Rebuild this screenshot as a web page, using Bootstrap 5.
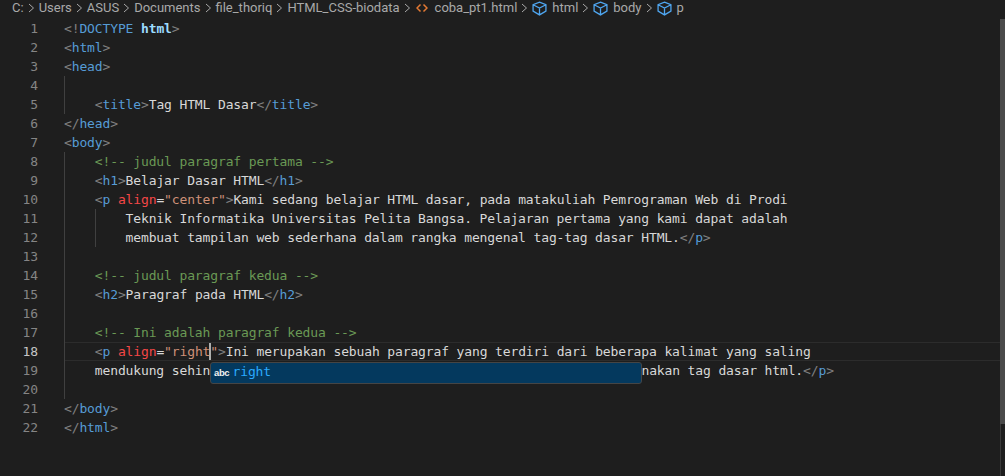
<!DOCTYPE html>
<html lang="en">
<head>
<meta charset="utf-8">
<link href="https://cdn.jsdelivr.net/npm/bootstrap@5.3.0/dist/css/bootstrap.min.css" rel="stylesheet">
<style>
html,body{height:476px;overflow:hidden;background:#1e1e1e}
.editor-shell{position:relative;height:476px;background:#1e1e1e;overflow:hidden}
.crumbs{height:19px;padding:0 0 3px 12px;font:13px/16px Roboto,"Noto Sans",sans-serif;color:#a9a9a9;white-space:nowrap}
.crumbs svg{flex:none}
.sep{width:9px;height:12px;margin:0 3px}
.sep path{fill:none;stroke:#a9a9a9}
.cube{width:15px;height:15px;margin-right:5px}
.cube path{fill:none;stroke:#4fa6f0;stroke-width:1.2}
.file-glyph{width:12px;height:10px;margin:0 7px 0 1px}
.file-glyph path{fill:none;stroke:#e37933;stroke-width:1.5}
.code-line{height:19px;font:13px/19px "DejaVu Sans Mono","Liberation Mono",monospace;letter-spacing:-.13px;white-space:pre;color:#d8d8d8}
.num{flex:0 0 38px;text-align:right;color:#858585}
.txt{flex:1;margin:0 5px 0 26px}
.current .txt{box-shadow:inset 0 1px 0 #2c2c2c,inset 0 -1px 0 #2c2c2c}
.current .num{color:#c6c6c6}
.gap-under-popup{display:inline-block;width:431.2px}
.p{color:#808080}.t{color:#569cd6}.a{color:#f44747}.s{color:#ce9178}.c{color:#6a9955}
.kw{color:#9cdcfe;font-weight:700}
.guide{position:absolute;width:1px;background:#404040}
.g1{left:64px;top:76px;height:38px}
.g2{left:64px;top:152px;height:247px}
.g3{left:95px;top:209px;height:38px}
.caret{position:absolute;left:209px;top:343px;width:2px;height:17px;background:#aeafad}
.suggest{position:absolute;left:210px;top:362px;width:432px;height:22px;background:#04395e;border:1px solid #454545;border-radius:3px;font:13px/17px "DejaVu Sans Mono","Liberation Mono",monospace;letter-spacing:-.13px}
.suggest b{font-weight:400;color:#2aaaff}
.abc{font:700 9.5px/19px "Liberation Sans",sans-serif;letter-spacing:-.4px;width:21.500px;padding-left:3px;color:#f0f0f0}
.scroll-strip{position:absolute;right:0;top:19px;width:5px;height:405px;background:#4a4a4a}
.scroll-edge{position:absolute;left:1000px;top:424px;width:1px;height:52px;background:#3a3a3a}
</style>
</head>
<body>
<div class="editor-shell">
  <div class="crumbs d-flex align-items-center">
    <span>C:</span><svg class="sep" viewBox="0 0 9 12"><path d="M2 2l4.500 4-4.500 4"/></svg>
    <span>Users</span><svg class="sep" viewBox="0 0 9 12"><path d="M2 2l4.500 4-4.500 4"/></svg>
    <span>ASUS</span><svg class="sep" viewBox="0 0 9 12"><path d="M2 2l4.500 4-4.500 4"/></svg>
    <span>Documents</span><svg class="sep" viewBox="0 0 9 12"><path d="M2 2l4.500 4-4.500 4"/></svg>
    <span>file_thoriq</span><svg class="sep" viewBox="0 0 9 12"><path d="M2 2l4.500 4-4.500 4"/></svg>
    <span>HTML_CSS-biodata</span><svg class="sep" viewBox="0 0 9 12"><path d="M2 2l4.500 4-4.500 4"/></svg>
    <svg class="file-glyph" viewBox="0 0 12 10"><path d="M4.500 1.500L1 5l3.500 3.500M7.500 1.500L11 5 7.500 8.500"/></svg>
    <span>coba_pt1.html</span><svg class="sep" viewBox="0 0 9 12"><path d="M2 2l4.500 4-4.500 4"/></svg>
    <svg class="cube" viewBox="0 0 14 14"><path d="M7 1l6 2.500v6L7 13 1 9.500v-6zM1 3.500L7 6.500l6-3M7 6.500V13"/></svg>
    <span>html</span><svg class="sep" viewBox="0 0 9 12"><path d="M2 2l4.500 4-4.500 4"/></svg>
    <svg class="cube" viewBox="0 0 14 14"><path d="M7 1l6 2.500v6L7 13 1 9.500v-6zM1 3.500L7 6.500l6-3M7 6.500V13"/></svg>
    <span>body</span><svg class="sep" viewBox="0 0 9 12"><path d="M2 2l4.500 4-4.500 4"/></svg>
    <svg class="cube" viewBox="0 0 14 14"><path d="M7 1l6 2.500v6L7 13 1 9.500v-6zM1 3.500L7 6.500l6-3M7 6.500V13"/></svg>
    <span>p</span>
  </div>
  <div class="code-line d-flex"><span class="num">1</span><span class="txt"><span class="p">&lt;!</span><span class="t">DOCTYPE</span> <span class="kw">html</span><span class="p">&gt;</span></span></div>
  <div class="code-line d-flex"><span class="num">2</span><span class="txt"><span class="p">&lt;</span><span class="t">html</span><span class="p">&gt;</span></span></div>
  <div class="code-line d-flex"><span class="num">3</span><span class="txt"><span class="p">&lt;</span><span class="t">head</span><span class="p">&gt;</span></span></div>
  <div class="code-line d-flex"><span class="num">4</span><span class="txt"></span></div>
  <div class="code-line d-flex"><span class="num">5</span><span class="txt">    <span class="p">&lt;</span><span class="t">title</span><span class="p">&gt;</span>Tag HTML Dasar<span class="p">&lt;/</span><span class="t">title</span><span class="p">&gt;</span></span></div>
  <div class="code-line d-flex"><span class="num">6</span><span class="txt"><span class="p">&lt;/</span><span class="t">head</span><span class="p">&gt;</span></span></div>
  <div class="code-line d-flex"><span class="num">7</span><span class="txt"><span class="p">&lt;</span><span class="t">body</span><span class="p">&gt;</span></span></div>
  <div class="code-line d-flex"><span class="num">8</span><span class="txt">    <span class="c">&lt;!-- judul paragraf pertama --&gt;</span></span></div>
  <div class="code-line d-flex"><span class="num">9</span><span class="txt">    <span class="p">&lt;</span><span class="t">h1</span><span class="p">&gt;</span>Belajar Dasar HTML<span class="p">&lt;/</span><span class="t">h1</span><span class="p">&gt;</span></span></div>
  <div class="code-line d-flex"><span class="num">10</span><span class="txt">    <span class="p">&lt;</span><span class="t">p</span> <span class="a">align</span>=<span class="s">"center"</span><span class="p">&gt;</span>Kami sedang belajar HTML dasar, pada matakuliah Pemrograman Web di Prodi</span></div>
  <div class="code-line d-flex"><span class="num">11</span><span class="txt">        Teknik Informatika Universitas Pelita Bangsa. Pelajaran pertama yang kami dapat adalah</span></div>
  <div class="code-line d-flex"><span class="num">12</span><span class="txt">        membuat tampilan web sederhana dalam rangka mengenal tag-tag dasar HTML.<span class="p">&lt;/</span><span class="t">p</span><span class="p">&gt;</span></span></div>
  <div class="code-line d-flex"><span class="num">13</span><span class="txt"></span></div>
  <div class="code-line d-flex"><span class="num">14</span><span class="txt">    <span class="c">&lt;!-- judul paragraf kedua --&gt;</span></span></div>
  <div class="code-line d-flex"><span class="num">15</span><span class="txt">    <span class="p">&lt;</span><span class="t">h2</span><span class="p">&gt;</span>Paragraf pada HTML<span class="p">&lt;/</span><span class="t">h2</span><span class="p">&gt;</span></span></div>
  <div class="code-line d-flex"><span class="num">16</span><span class="txt"></span></div>
  <div class="code-line d-flex"><span class="num">17</span><span class="txt">    <span class="c">&lt;!-- Ini adalah paragraf kedua --&gt;</span></span></div>
  <div class="code-line current d-flex"><span class="num">18</span><span class="txt">    <span class="p">&lt;</span><span class="t">p</span> <span class="a">align</span>=<span class="s">"right"</span><span class="p">&gt;</span>Ini merupakan sebuah paragraf yang terdiri dari beberapa kalimat yang saling</span></div>
  <div class="code-line d-flex"><span class="num">19</span><span class="txt">    mendukung sehin<span class="gap-under-popup"></span>nakan tag dasar html.<span class="p">&lt;/</span><span class="t">p</span><span class="p">&gt;</span></span></div>
  <div class="code-line d-flex"><span class="num">20</span><span class="txt"></span></div>
  <div class="code-line d-flex"><span class="num">21</span><span class="txt"><span class="p">&lt;/</span><span class="t">body</span><span class="p">&gt;</span></span></div>
  <div class="code-line d-flex"><span class="num">22</span><span class="txt"><span class="p">&lt;/</span><span class="t">html</span><span class="p">&gt;</span></span></div>
  <div class="guide g1"></div>
  <div class="guide g2"></div>
  <div class="guide g3"></div>
  <div class="caret"></div>
  <div class="suggest d-flex"><span class="abc">abc</span><b>right</b></div>
  <div class="scroll-strip"></div>
  <div class="scroll-edge"></div>
</div>
</body>
</html>
